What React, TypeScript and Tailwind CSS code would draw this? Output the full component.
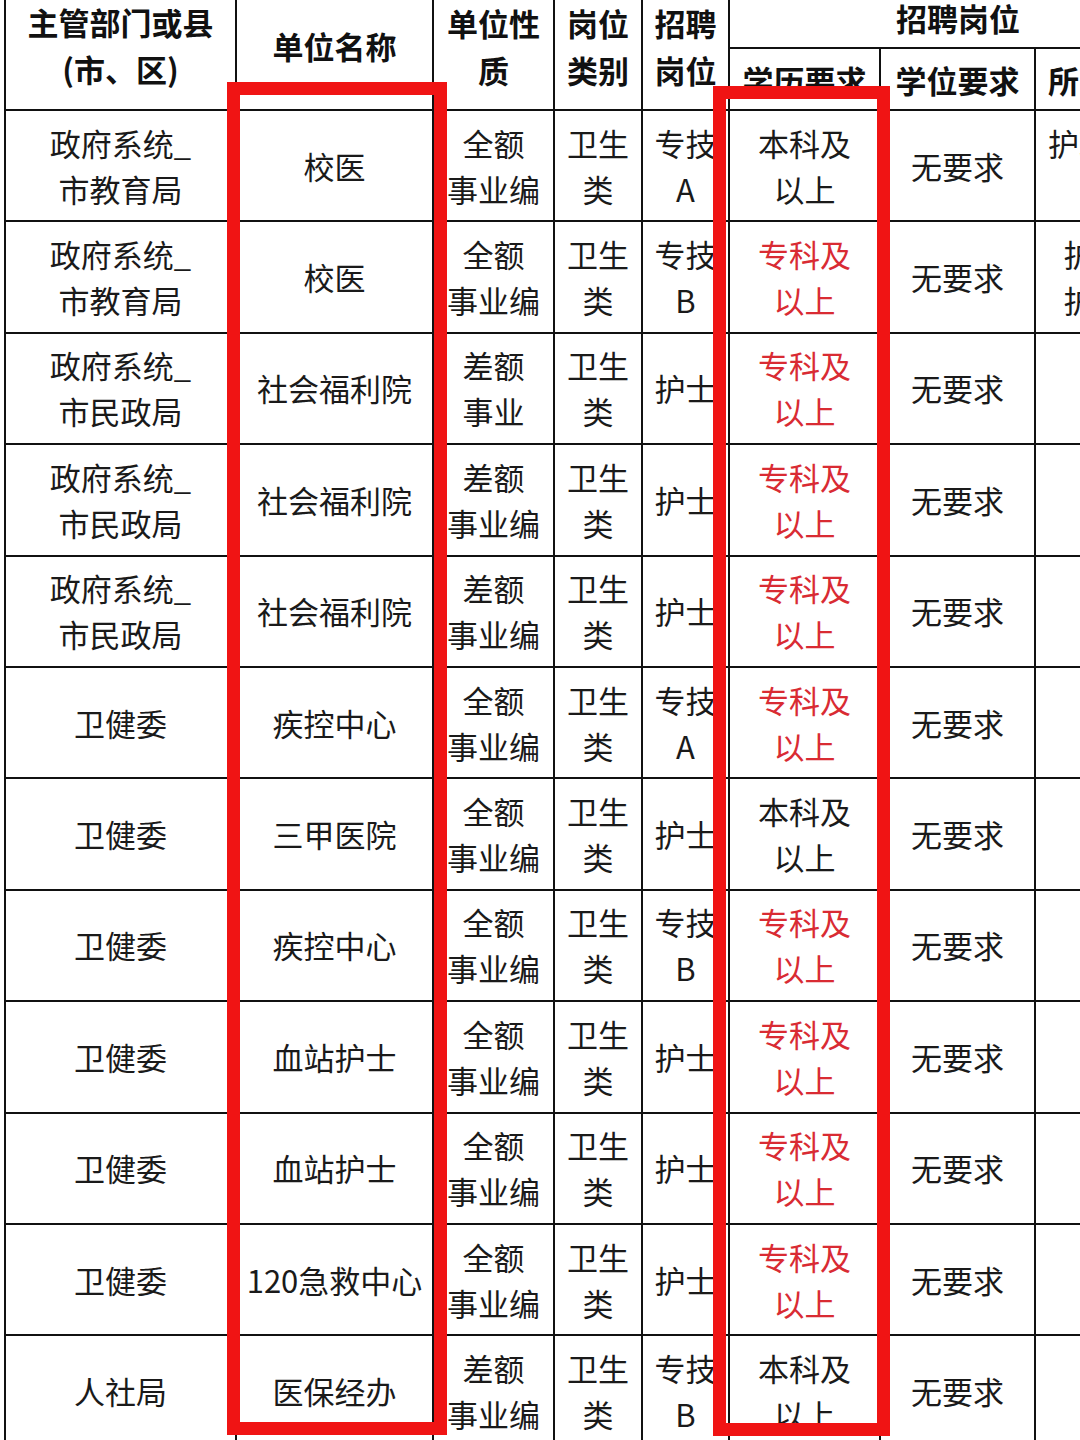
import React from "react";

type Row = {
  dept: string[];
  unit: string;
  nature: string[];
  cat: string[];
  post: string[];
  edu: string[];
  red: boolean;
  major: string[];
};

const rows: Row[] = [
  { dept: ["政府系统_", "市教育局"], unit: "校医", nature: ["全额", "事业编"], cat: ["卫生", "类"], post: ["专技", "A"], edu: ["本科及", "以上"], red: false, major: ["护理、护理学", "专业"] },
  { dept: ["政府系统_", "市教育局"], unit: "校医", nature: ["全额", "事业编"], cat: ["卫生", "类"], post: ["专技", "B"], edu: ["专科及", "以上"], red: true, major: ["护理、助产", "护理学专业"] },
  { dept: ["政府系统_", "市民政局"], unit: "社会福利院", nature: ["差额", "事业"], cat: ["卫生", "类"], post: ["护士"], edu: ["专科及", "以上"], red: true, major: ["护理学"] },
  { dept: ["政府系统_", "市民政局"], unit: "社会福利院", nature: ["差额", "事业编"], cat: ["卫生", "类"], post: ["护士"], edu: ["专科及", "以上"], red: true, major: ["护理学"] },
  { dept: ["政府系统_", "市民政局"], unit: "社会福利院", nature: ["差额", "事业编"], cat: ["卫生", "类"], post: ["护士"], edu: ["专科及", "以上"], red: true, major: ["护理学"] },
  { dept: ["卫健委"], unit: "疾控中心", nature: ["全额", "事业编"], cat: ["卫生", "类"], post: ["专技", "A"], edu: ["专科及", "以上"], red: true, major: ["护理学"] },
  { dept: ["卫健委"], unit: "三甲医院", nature: ["全额", "事业编"], cat: ["卫生", "类"], post: ["护士"], edu: ["本科及", "以上"], red: false, major: ["护理学"] },
  { dept: ["卫健委"], unit: "疾控中心", nature: ["全额", "事业编"], cat: ["卫生", "类"], post: ["专技", "B"], edu: ["专科及", "以上"], red: true, major: ["护理学"] },
  { dept: ["卫健委"], unit: "血站护士", nature: ["全额", "事业编"], cat: ["卫生", "类"], post: ["护士"], edu: ["专科及", "以上"], red: true, major: ["护理学"] },
  { dept: ["卫健委"], unit: "血站护士", nature: ["全额", "事业编"], cat: ["卫生", "类"], post: ["护士"], edu: ["专科及", "以上"], red: true, major: ["护理学"] },
  { dept: ["卫健委"], unit: "120急救中心", nature: ["全额", "事业编"], cat: ["卫生", "类"], post: ["护士"], edu: ["专科及", "以上"], red: true, major: ["护理学"] },
  { dept: ["人社局"], unit: "医保经办", nature: ["差额", "事业编"], cat: ["卫生", "类"], post: ["专技", "B"], edu: ["本科及", "以上"], red: false, major: ["护理学"] },
];

function Cell({ lines, className = "" }: { lines: string[]; className?: string }) {
  return (
    <div className={`bg-white flex flex-col items-center justify-center text-center whitespace-nowrap overflow-hidden text-[31px] leading-[46px] text-[#1a1a1a] ${className}`}>
      {lines.map((l, i) => (
        <span key={i}>{l}</span>
      ))}
    </div>
  );
}

function Head({ lines, className = "" }: { lines: string[]; className?: string }) {
  return (
    <div className={`bg-white flex flex-col items-center justify-center text-center whitespace-nowrap overflow-hidden text-[31px] leading-[47px] font-bold text-[#111] ${className}`}>
      {lines.map((l, i) => (
        <span key={i}>{l}</span>
      ))}
    </div>
  );
}

export default function App() {
  return (
    <div
      className="relative w-[1080px] h-[1440px] overflow-hidden bg-white"
      style={{ fontFamily: '"Noto Sans CJK SC", "Noto Sans", sans-serif' }}
    >
      <div className="ml-[4px] -mt-[6px] w-[1232px] bg-[#111] pl-[2px] grid gap-[2px] grid-cols-[229px_195px_119px_86px_85px_149px_153px_210px] grid-rows-[53px_60px_repeat(12,109.4px)]">
        <Head lines={["主管部门或县", "(市、区)"]} className="row-span-2 pb-[14px]" />
        <Head lines={["单位名称"]} className="row-span-2 pb-[12px]" />
        <Head lines={["单位性", "质"]} className="row-span-2 pb-[12px]" />
        <Head lines={["岗位", "类别"]} className="row-span-2 pb-[12px]" />
        <Head lines={["招聘", "岗位"]} className="row-span-2 pb-[12px]" />
        <Head lines={["招聘岗位"]} className="col-span-3 pr-[60px] pb-[6px]" />
        <Head lines={["学历要求"]} />
        <Head lines={["学位要求"]} />
        <Head lines={["所学专业要求"]} />
        {rows.map((r, i) => (
          <React.Fragment key={i}>
            <Cell lines={r.dept} />
            <Cell lines={[r.unit]} />
            <Cell lines={r.nature} />
            <Cell lines={r.cat} />
            <Cell lines={r.post} />
            <Cell lines={r.edu} className={r.red ? "!text-[#d92b33]" : ""} />
            <Cell lines={["无要求"]} />
            <Cell lines={r.major} />
          </React.Fragment>
        ))}
      </div>

      <div className="absolute left-[227px] top-[82px] w-[220px] h-[1353px] border-[13px] border-[#f01414]" />
      <div className="absolute left-[713px] top-[86px] w-[177px] h-[1350px] border-[13px] border-[#f01414]" />
    </div>
  );
}
